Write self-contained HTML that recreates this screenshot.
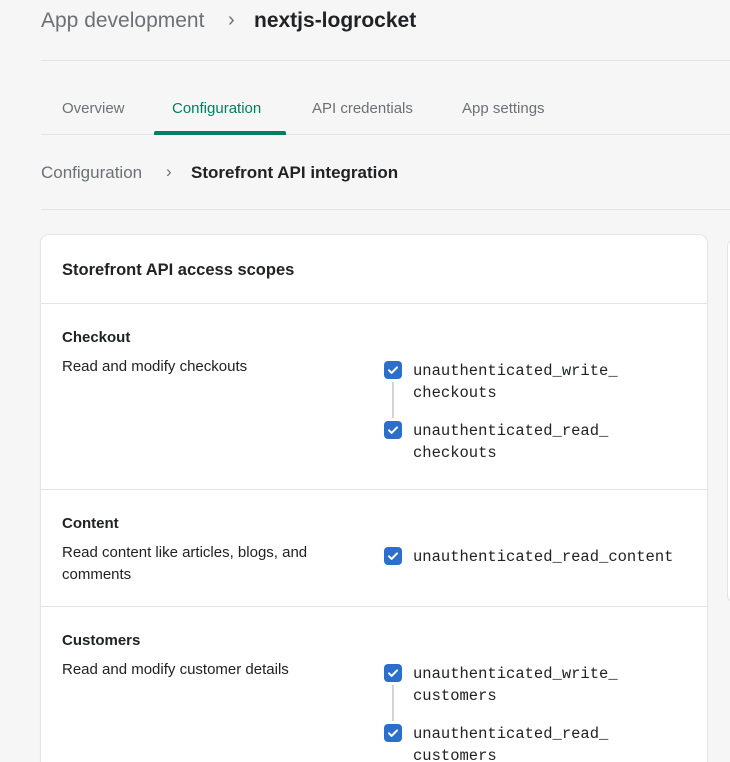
<!DOCTYPE html><html style="width:730px;height:762px;overflow:hidden"><head><style>
body{margin:0;background:#f6f6f7;font-family:"Liberation Sans",sans-serif;width:730px;height:762px;overflow:hidden;position:relative;color:#202223}
.a{position:absolute;white-space:nowrap}
.line{position:absolute;left:41px;right:0;height:1px;background:#e1e3e5}
.card{position:absolute;left:41px;top:235px;width:666px;height:527px;background:#fff;border-radius:8px 8px 0 0;box-shadow:0 0 0 1px #e4e5e7,0 1px 2px rgba(0,0,0,.1);overflow:hidden}
.sep{position:absolute;left:0;right:0;height:1px;background:#e1e3e5}
.t{font-size:15px;font-weight:bold}
.d{font-size:15px;line-height:22px;color:#202223}
.cb{position:absolute;left:343px;width:18px;height:18px;background:#2c6ecb;border-radius:4px}
.cb svg{position:absolute;left:3px;top:3px}
.m{position:absolute;left:372px;font-family:"Liberation Mono",monospace;font-size:15.5px;line-height:22px;color:#202223}
.vl{position:absolute;left:351px;width:2px;background:#d2d5d8}
</style></head><body>
<div class="a" style="left:41px;top:9px;font-size:21px;color:#6d7175">App development</div>
<div class="a" style="left:228px;top:9px;font-size:20px;color:#6d7175">›</div>
<div class="a" style="left:254px;top:9px;font-size:21px;font-weight:bold;color:#202223">nextjs-logrocket</div>
<div class="line" style="top:60px"></div>
<div class="a" style="left:62px;top:100px;font-size:15px;color:#6d7175">Overview</div>
<div class="a" style="left:172px;top:100px;font-size:15px;color:#008060">Configuration</div>
<div class="a" style="left:312px;top:100px;font-size:15px;color:#6d7175">API credentials</div>
<div class="a" style="left:462px;top:100px;font-size:15px;color:#6d7175">App settings</div>
<div class="line" style="top:134px"></div>
<div class="a" style="left:154px;top:131px;width:132px;height:4px;background:#008060;border-radius:2px 2px 0 0"></div>
<div class="a" style="left:41px;top:163px;font-size:17px;color:#6d7175">Configuration</div>
<div class="a" style="left:166px;top:162px;font-size:17px;color:#6d7175">›</div>
<div class="a" style="left:191px;top:163px;font-size:17px;font-weight:bold;color:#202223">Storefront API integration</div>
<div class="line" style="top:209px"></div>
<div class="a" style="left:727px;top:240px;width:10px;height:360px;background:#fff;border:1px solid #e1e3e5;border-radius:6px"></div>
<div class="card">
<div class="a" style="left:21px;top:26px;font-size:16.5px;font-weight:bold">Storefront API access scopes</div>
<div class="sep" style="top:68px"></div>
<div class="a t" style="left:21px;top:94px">Checkout</div>
<div class="a d" style="left:21px;top:121px">Read and modify checkouts</div>
<div class="cb" style="top:126px"><svg width="12" height="12" viewBox="0 0 12 12"><path d="M2 6.3l2.6 2.6L10 3.4" stroke="#fff" stroke-width="2" fill="none" stroke-linecap="round" stroke-linejoin="round"/></svg></div>
<div class="vl" style="top:147px;height:36px"></div>
<div class="m" style="top:125px">unauthenticated_write_<br>checkouts</div>
<div class="cb" style="top:186px"><svg width="12" height="12" viewBox="0 0 12 12"><path d="M2 6.3l2.6 2.6L10 3.4" stroke="#fff" stroke-width="2" fill="none" stroke-linecap="round" stroke-linejoin="round"/></svg></div>
<div class="m" style="top:185px">unauthenticated_read_<br>checkouts</div>
<div class="sep" style="top:254px"></div>
<div class="a t" style="left:21px;top:280px">Content</div>
<div class="a d" style="left:21px;top:307px">Read content like articles, blogs, and<br>comments</div>
<div class="cb" style="top:312px"><svg width="12" height="12" viewBox="0 0 12 12"><path d="M2 6.3l2.6 2.6L10 3.4" stroke="#fff" stroke-width="2" fill="none" stroke-linecap="round" stroke-linejoin="round"/></svg></div>
<div class="m" style="top:311px">unauthenticated_read_content</div>
<div class="sep" style="top:371px"></div>
<div class="a t" style="left:21px;top:397px">Customers</div>
<div class="a d" style="left:21px;top:424px">Read and modify customer details</div>
<div class="cb" style="top:429px"><svg width="12" height="12" viewBox="0 0 12 12"><path d="M2 6.3l2.6 2.6L10 3.4" stroke="#fff" stroke-width="2" fill="none" stroke-linecap="round" stroke-linejoin="round"/></svg></div>
<div class="vl" style="top:450px;height:36px"></div>
<div class="m" style="top:428px">unauthenticated_write_<br>customers</div>
<div class="cb" style="top:489px"><svg width="12" height="12" viewBox="0 0 12 12"><path d="M2 6.3l2.6 2.6L10 3.4" stroke="#fff" stroke-width="2" fill="none" stroke-linecap="round" stroke-linejoin="round"/></svg></div>
<div class="m" style="top:488px">unauthenticated_read_<br>customers</div>
</div>
</body></html>
